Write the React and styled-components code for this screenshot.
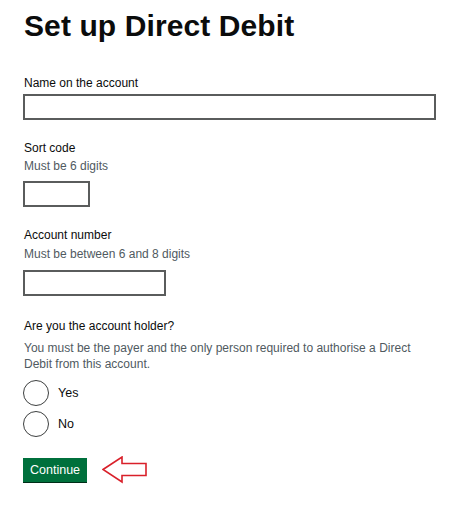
import React from 'react';
import styled, { createGlobalStyle } from 'styled-components';

const GlobalStyle = createGlobalStyle`
  html, body {
    margin: 0;
    padding: 0;
    background: #ffffff;
  }
  body {
    font-family: "Liberation Sans", Arial, sans-serif;
    color: #0b0c0c;
  }
`;

const Page = styled.main`
  padding: 11px 23px 0 23px;
  width: 474px;
  box-sizing: border-box;
`;

const Heading = styled.h1`
  margin: 0 0 34px 1px;
  font-size: 30px;
  line-height: 30px;
  font-weight: 700;
  letter-spacing: 0.1px;
`;

const FormGroup = styled.div`
  display: flex;
  flex-direction: column;
  align-items: flex-start;
  margin-bottom: ${(p) => p.$gap || 20}px;
`;

const Label = styled.label`
  display: block;
  margin: 0 0 ${(p) => p.$mb || 2}px 1px;
  font-size: 12px;
  line-height: 16px;
`;

const Hint = styled.div`
  margin: 0 0 ${(p) => p.$mb || 7}px 1px;
  font-size: 12px;
  line-height: 16px;
  color: #505a5f;
  max-width: 395px;
`;

const Input = styled.input`
  box-sizing: border-box;
  width: ${(p) => p.$width}px;
  height: 26px;
  margin: 0;
  padding: 2px 4px;
  border: 2px solid #5a5c5c;
  border-radius: 0;
  background: #ffffff;
  font: inherit;
  font-size: 13px;
`;

const RadioList = styled.div`
  display: flex;
  flex-direction: column;
  gap: 5px;
`;

const RadioItem = styled.label`
  display: flex;
  align-items: center;
  gap: 9px;
  font-size: 12.5px;
  line-height: 26px;
`;

const RadioCircle = styled.span`
  box-sizing: border-box;
  width: 26px;
  height: 26px;
  border: 1.5px solid #3d3f3f;
  border-radius: 50%;
  background: #ffffff;
`;

const ActionRow = styled.div`
  display: flex;
  align-items: center;
  gap: 15px;
`;

const Button = styled.button`
  box-sizing: border-box;
  height: 24px;
  padding: 0 7px;
  margin: 0;
  border: 0;
  border-radius: 0;
  background: #00703c;
  box-shadow: 0 1px 0 #002d18;
  color: #ffffff;
  font-family: "Liberation Sans", Arial, sans-serif;
  font-size: 12.5px;
  line-height: 24px;
  cursor: pointer;
`;

const PointerArrow = () => (
  <svg width="46" height="28" viewBox="0 0 46 28" aria-hidden="true">
    <path
      d="M1 13.5 L20 1 L20 7.5 L44 7.5 L44 19.5 L20 19.5 L20 26 Z"
      fill="#ffffff"
      stroke="#d9202a"
      strokeWidth="1.6"
      strokeLinejoin="miter"
    />
  </svg>
);

export default function App() {
  return (
    <>
      <GlobalStyle />
      <Page>
        <Heading>Set up Direct Debit</Heading>

        <FormGroup $gap={20}>
          <Label $mb={3} htmlFor="name">Name on the account</Label>
          <Input id="name" type="text" $width={413} />
        </FormGroup>

        <FormGroup $gap={20}>
          <Label htmlFor="sort-code">Sort code</Label>
          <Hint>Must be 6 digits</Hint>
          <Input id="sort-code" type="text" $width={67} />
        </FormGroup>

        <FormGroup $gap={22}>
          <Label $mb={3} htmlFor="account-number">Account number</Label>
          <Hint $mb={8}>Must be between 6 and 8 digits</Hint>
          <Input id="account-number" type="text" $width={143} />
        </FormGroup>

        <FormGroup $gap={19}>
          <Label $mb={6}>Are you the account holder?</Label>
          <Hint $mb={8}>
            You must be the payer and the only person required to authorise a Direct Debit from this account.
          </Hint>
          <RadioList>
            <RadioItem>
              <RadioCircle />
              Yes
            </RadioItem>
            <RadioItem>
              <RadioCircle />
              No
            </RadioItem>
          </RadioList>
        </FormGroup>

        <ActionRow>
          <Button type="button">Continue</Button>
          <PointerArrow />
        </ActionRow>
      </Page>
    </>
  );
}
